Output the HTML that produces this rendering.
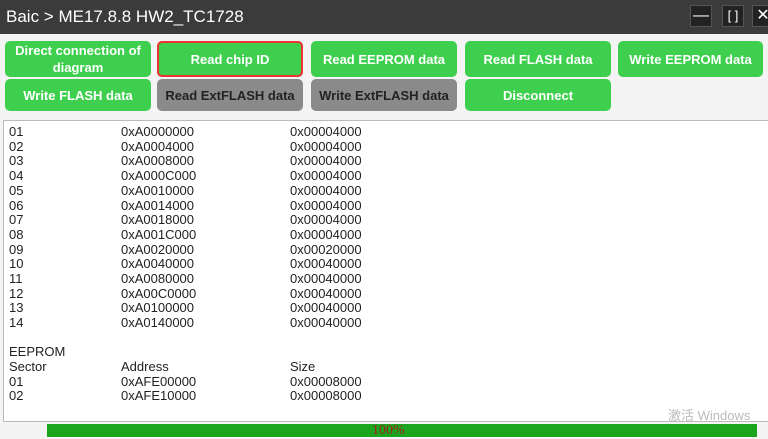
<!DOCTYPE html><html><head><style>
body{margin:0;width:768px;height:437px;overflow:hidden;background:#f4f4f4;font-family:"Liberation Sans",sans-serif;position:relative}
.title{position:absolute;left:0;top:0;width:768px;height:34px;background:#3b3b3b;color:#fff;font-size:17px;line-height:34px;padding-left:6px;box-sizing:border-box}
.ic{position:absolute;top:5px;width:20px;height:20px;background:#222;border:1px solid #555;color:#fff;font-size:16px;text-align:center;line-height:20px}
.b{position:absolute;background:#3fcf4f;color:#fff;font-weight:bold;font-size:13px;text-align:center;border-radius:5px;display:flex;align-items:center;justify-content:center;line-height:17px}
.g{background:#8a8a8a;color:#222}
.box{position:absolute;left:3px;top:120px;width:770px;height:300px;background:#fff;border:1px solid #bbb}
.r{position:absolute;font-size:13px;color:#222}
.bar{position:absolute;left:47px;top:424px;width:710px;height:13px;background:#1ba51f}
</style></head><body>
<div class="title">Baic &gt; ME17.8.8 HW2_TC1728</div>
<div class="ic" style="left:690px">—</div>
<div class="ic" style="left:722px;font-size:13px">[ ]</div>
<div class="ic" style="left:752px">✕</div>
<div class="b" style="left:5px;top:41px;width:146px;height:36px">Direct connection of<br>diagram</div>
<div class="b" style="left:157px;top:41px;width:146px;height:36px;box-shadow:inset 0 0 0 2px #e33">Read chip ID</div>
<div class="b" style="left:311px;top:41px;width:146px;height:36px">Read EEPROM data</div>
<div class="b" style="left:465px;top:41px;width:146px;height:36px">Read FLASH data</div>
<div class="b" style="left:618px;top:41px;width:145px;height:36px">Write EEPROM data</div>
<div class="b" style="left:5px;top:79px;width:146px;height:32px">Write FLASH data</div>
<div class="b g" style="left:157px;top:79px;width:146px;height:32px">Read ExtFLASH data</div>
<div class="b g" style="left:311px;top:79px;width:146px;height:32px">Write ExtFLASH data</div>
<div class="b" style="left:465px;top:79px;width:146px;height:32px">Disconnect</div>
<div class="box"></div>
<div id="rows"></div>
<script>
var d=[["01","0xA0000000","0x00004000"],["02","0xA0004000","0x00004000"],["03","0xA0008000","0x00004000"],["04","0xA000C000","0x00004000"],["05","0xA0010000","0x00004000"],["06","0xA0014000","0x00004000"],["07","0xA0018000","0x00004000"],["08","0xA001C000","0x00004000"],["09","0xA0020000","0x00020000"],["10","0xA0040000","0x00040000"],["11","0xA0080000","0x00040000"],["12","0xA00C0000","0x00040000"],["13","0xA0100000","0x00040000"],["14","0xA0140000","0x00040000"]];
var h="";function row(y,a,b,c){h+='<div class="r" style="left:9px;top:'+y+'px">'+a+'</div><div class="r" style="left:121px;top:'+y+'px">'+b+'</div><div class="r" style="left:290px;top:'+y+'px">'+c+'</div>';}
d.forEach(function(r,i){row(124+i*14.7,r[0],r[1],r[2]);});
row(344,"EEPROM","","");row(359,"Sector","Address","Size");row(373.5,"01","0xAFE00000","0x00008000");row(388,"02","0xAFE10000","0x00008000");
document.getElementById("rows").innerHTML=h;
</script>
<div class="bar"></div>
<div style="position:absolute;left:372px;top:423px;color:#a02020;font-size:14px;font-family:'Liberation Serif',serif">100%</div>
<div style="position:absolute;left:668px;top:405px;color:#bbb;font-size:13px;font-family:'Liberation Sans','Noto Sans CJK SC',sans-serif">激活 Windows</div>
</body></html>
